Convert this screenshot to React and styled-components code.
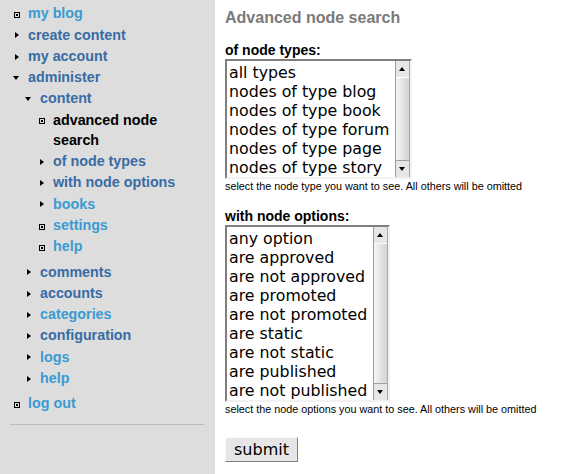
import styled, { createGlobalStyle, css } from "styled-components";

const GlobalStyle = createGlobalStyle`
  html, body {
    margin: 0;
    padding: 0;
    background: #fff;
  }
  #root {
    height: 474px;
  }
`;

const menu = [
  { label: "my blog", type: "leaf", tone: "light" },
  { label: "create content", type: "collapsed" },
  { label: "my account", type: "collapsed" },
  {
    label: "administer",
    type: "expanded",
    children: [
      {
        label: "content",
        type: "expanded",
        children: [
          { label: "advanced node search", type: "leaf", active: true },
          { label: "of node types", type: "collapsed" },
          { label: "with node options", type: "collapsed" },
          { label: "books", type: "collapsed", tone: "light" },
          { label: "settings", type: "leaf", tone: "light" },
          { label: "help", type: "leaf", tone: "light" },
        ],
      },
      { label: "comments", type: "collapsed" },
      { label: "accounts", type: "collapsed" },
      { label: "categories", type: "collapsed", tone: "light" },
      { label: "configuration", type: "collapsed" },
      { label: "logs", type: "collapsed", tone: "light" },
      { label: "help", type: "collapsed", tone: "light" },
    ],
  },
  { label: "log out", type: "leaf", tone: "light" },
];

const nodeTypes = [
  "all types",
  "nodes of type blog",
  "nodes of type book",
  "nodes of type forum",
  "nodes of type page",
  "nodes of type story",
];

const nodeOptions = [
  "any option",
  "are approved",
  "are not approved",
  "are promoted",
  "are not promoted",
  "are static",
  "are not static",
  "are published",
  "are not published",
];

function MenuList({ items, level }) {
  return (
    <MenuUl $level={level}>
      {items.map((item) => (
        <MenuItem key={item.label} $type={item.type}>
          <MenuLink $tone={item.tone} $active={item.active}>
            {item.label}
          </MenuLink>
          {item.children && <MenuList items={item.children} level={level + 1} />}
        </MenuItem>
      ))}
    </MenuUl>
  );
}

function ListBox({ options, width }) {
  return (
    <Box $width={width}>
      <Options>
        {options.map((o) => (
          <Option key={o}>{o}</Option>
        ))}
      </Options>
      <Scrollbar>
        <ScrollButton $dir="up" />
        <ScrollTrack />
        <ScrollButton $dir="down" />
      </Scrollbar>
    </Box>
  );
}

export default function App() {
  return (
    <>
      <GlobalStyle />
      <Page>
        <Sidebar>
          <MenuList items={menu} level={0} />
          <Rule />
        </Sidebar>
        <Main>
          <Title>Advanced node search</Title>
          <FormItem>
            <Label>of node types:</Label>
            <ListBox options={nodeTypes} width={187} />
            <Help>select the node type you want to see. All others will be omitted</Help>
          </FormItem>
          <FormItem $gap>
            <Label>with node options:</Label>
            <ListBox options={nodeOptions} width={165} />
            <Help>select the node options you want to see. All others will be omitted</Help>
          </FormItem>
          <Submit type="button">submit</Submit>
        </Main>
      </Page>
    </>
  );
}

const Page = styled.div`
  display: flex;
  height: 474px;
`;

const Sidebar = styled.div`
  width: 215px;
  flex-shrink: 0;
  box-sizing: border-box;
  padding: 2px 11px 0 10px;
  background: #dddddd;
  font-family: "Liberation Sans", Arial, sans-serif;
`;

// nested lists sit inside the parent item's 16px text indent
const MenuUl = styled.ul`
  list-style: none;
  margin: 0;
  padding: 0 0 0 ${(p) => (p.$level === 0 ? 2 : 0)}px;
  ${(p) =>
    p.$level > 0 &&
    css`
      margin: 0 0 4px ${p.$level === 1 ? -4 : -3}px;
    `}
`;

const bullets = {
  leaf: css`
    left: 2px;
    top: 10px;
    width: 4px;
    height: 4px;
    border: 1px solid #000;
    background: linear-gradient(#000, #000) center / 2px 2px no-repeat;
  `,
  collapsed: css`
    left: 3px;
    top: 9px;
    width: 0;
    height: 0;
    border-left: 4px solid #000;
    border-top: 3.5px solid transparent;
    border-bottom: 3.5px solid transparent;
  `,
  expanded: css`
    left: 1px;
    top: 10px;
    width: 0;
    height: 0;
    border-top: 4px solid #000;
    border-left: 3.5px solid transparent;
    border-right: 3.5px solid transparent;
  `,
};

const MenuItem = styled.li`
  position: relative;
  padding: 1.3px 0 0 16px;
  line-height: 20px;

  &::before {
    content: "";
    position: absolute;
    ${(p) => bullets[p.$type]}
  }
`;

const MenuLink = styled.span`
  font-size: 14.3px;
  font-weight: bold;
  color: ${(p) => (p.$active ? "#000" : p.$tone === "light" ? "#3a9bd3" : "#386ca4")};
`;

const Rule = styled.hr`
  margin: 11px 0 0;
  border: none;
  border-top: 1px solid #bbbbbb;
`;

const Main = styled.div`
  flex: 1;
  padding: 8px 10px;
  font-family: "Liberation Sans", Arial, sans-serif;
`;

const Title = styled.h2`
  margin: 0 0 14px;
  font-size: 16px;
  line-height: 20px;
  font-weight: bold;
  color: #7a7a7a;
`;

const FormItem = styled.div`
  margin-top: ${(p) => (p.$gap ? "16px" : "0")};
`;

const Label = styled.div`
  font-size: 14px;
  line-height: 16px;
  font-weight: bold;
  color: #000;
  margin-bottom: 1px;
`;

const Box = styled.div`
  display: flex;
  width: ${(p) => p.$width}px;
  box-sizing: border-box;
  border: 2px solid;
  border-color: #7f7f7f #f2f2f2 #f2f2f2 #7f7f7f;
  background: #fff;
`;

const Options = styled.div`
  flex: 1;
  padding: 2px 0 0 2px;
  font-family: "DejaVu Sans", sans-serif;
  font-size: 15.8px;
  line-height: 19px;
  color: #000;
  white-space: nowrap;
`;

const Option = styled.div``;

const Scrollbar = styled.div`
  width: 15px;
  display: flex;
  flex-direction: column;
  border-left: 1px solid #9c9c9c;
  border-right: 1px solid #a8a8a8;
  box-sizing: border-box;
`;

const ScrollButton = styled.div`
  height: 16px;
  flex-shrink: 0;
  background: #e6e6e6;
  position: relative;
  ${(p) =>
    p.$dir === "up"
      ? css`
          border-bottom: 1px solid #fff;
        `
      : css`
          border-top: 1px solid #a0a0a0;
        `}

  &::after {
    content: "";
    position: absolute;
    left: 3px;
    top: 6px;
    border-left: 3.5px solid transparent;
    border-right: 3.5px solid transparent;
    ${(p) =>
      p.$dir === "up"
        ? css`
            border-bottom: 4px solid #000;
          `
        : css`
            border-top: 4px solid #000;
          `}
  }
`;

const ScrollTrack = styled.div`
  flex: 1;
  background: linear-gradient(to right, #f6f6f6, #d2d2d2);
`;

const Help = styled.div`
  margin-top: 1px;
  font-size: 10.8px;
  line-height: 12px;
  color: #000;
`;

const Submit = styled.button`
  margin-top: 22px;
  width: 73px;
  height: 25px;
  padding: 0;
  font-family: "DejaVu Sans", sans-serif;
  font-size: 16px;
  color: #000;
  background: #e6e6e6;
  border: 1px solid;
  border-color: #fafafa #808080 #808080 #fafafa;
  border-radius: 0;
`;
